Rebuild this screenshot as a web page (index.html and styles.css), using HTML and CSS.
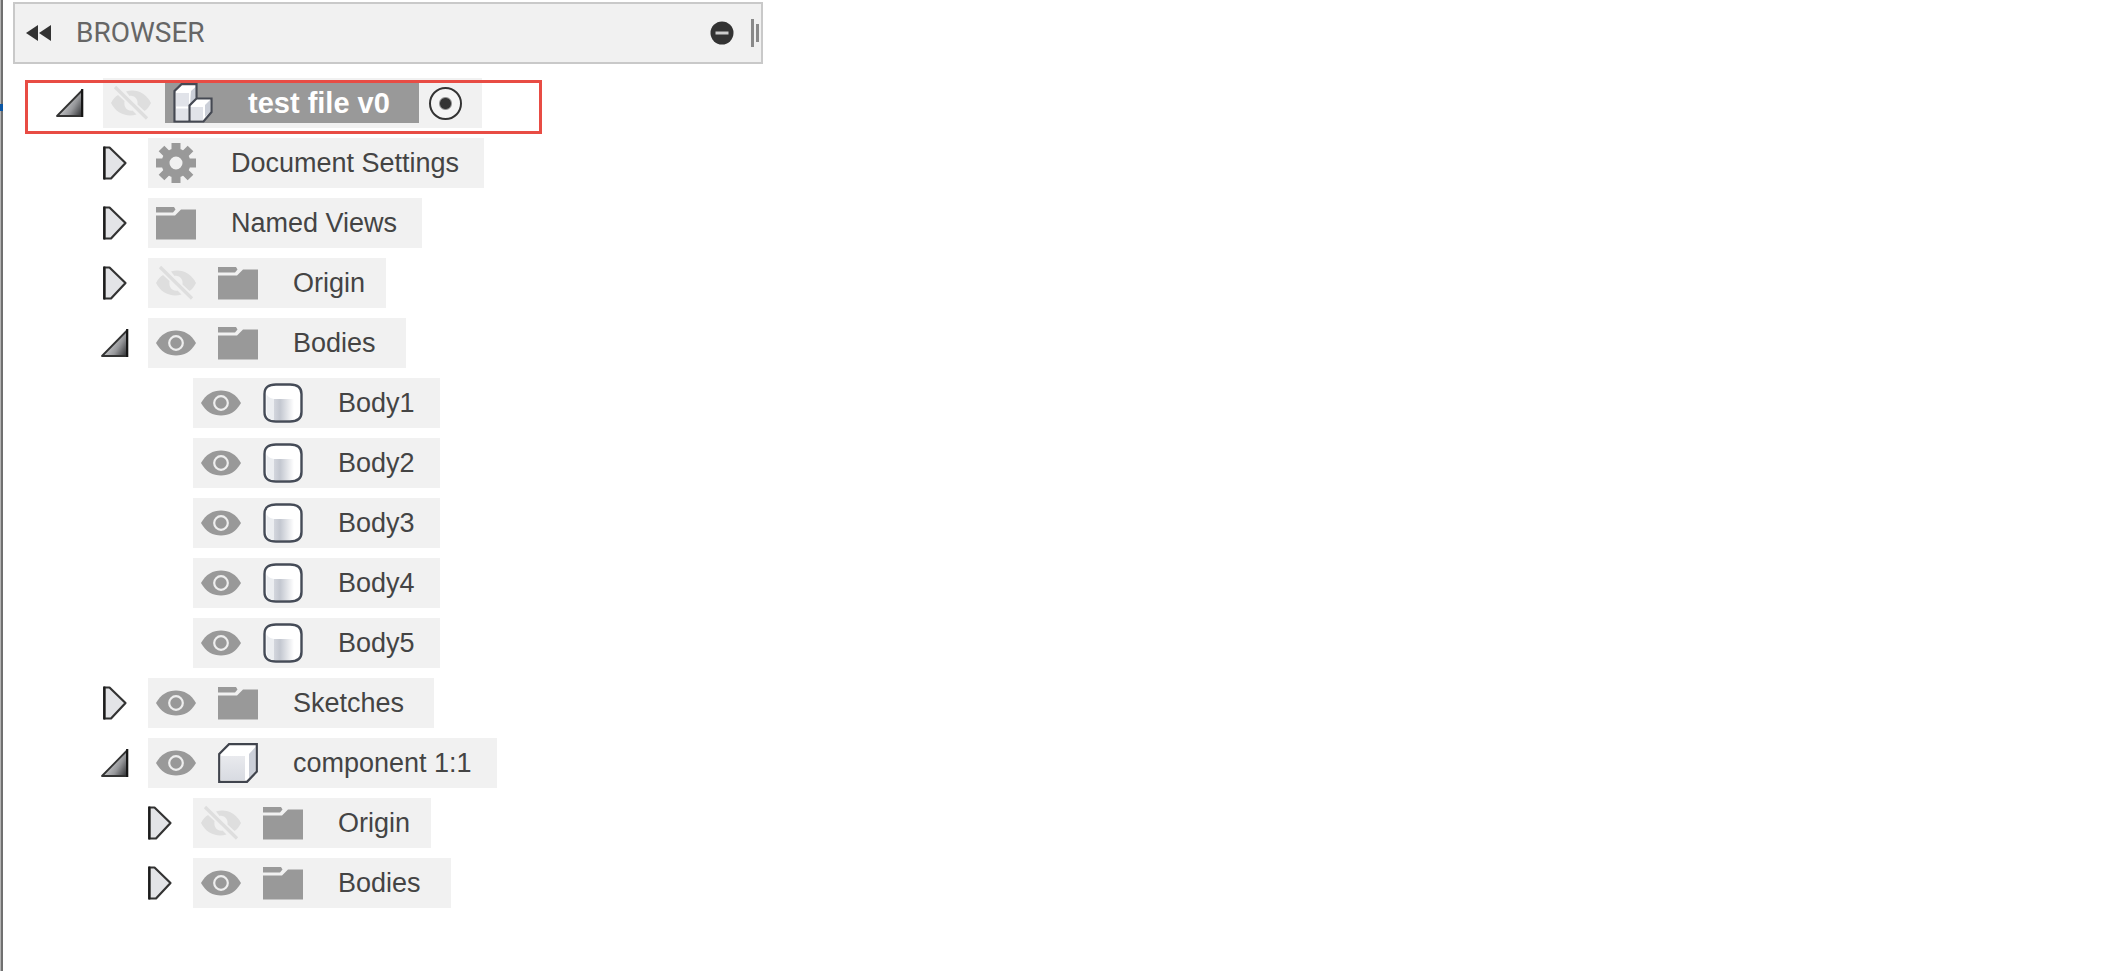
FILE: index.html
```html
<!DOCTYPE html>
<html lang="en">
<head>
    <meta charset="UTF-8">
    <meta name="viewport" content="width=device-width, initial-scale=1.0">
    <title>Browser</title>
    <link rel="stylesheet" href="styles.css">
</head>
<body>
    <!-- Shared icons -->
    <svg class="sprite" aria-hidden="true">
        <defs>
            <linearGradient id="openFill" x1="0.2" y1="0.4" x2="1" y2="0.9">
                <stop offset="0" stop-color="#d5d6d8"/>
                <stop offset="0.55" stop-color="#96979a"/>
                <stop offset="1" stop-color="#36373a"/>
            </linearGradient>
            <linearGradient id="bodyFill">
                <stop offset="0" stop-color="#d3d6dd"/>
                <stop offset="0.3" stop-color="#c3c7d0"/>
                <stop offset="1" stop-color="#ffffff"/>
            </linearGradient>
            <linearGradient id="faceFill" x2="0" y2="1">
                <stop offset="0" stop-color="#e9eaee"/>
                <stop offset="1" stop-color="#d8dbe2"/>
            </linearGradient>
        </defs>
        <symbol id="open" viewBox="0 0 30 36">
            <path d="M28 5.500V31H3z" fill="url(#openFill)" stroke="#333" stroke-width="1.800" stroke-linejoin="round"/>
            <path d="M28.200 4V32" stroke="#151515" stroke-width="2.200"/>
        </symbol>
        <symbol id="closed" viewBox="0 0 30 36">
            <path d="M5.500 2.500H10.500L26.500 18L12 33.500H5.500z" fill="#e3e4e7" stroke="#333" stroke-width="2.200" stroke-linejoin="round"/>
            <path d="M5.200 1.500V34.500" stroke="#1c1c1c" stroke-width="2.200"/>
        </symbol>
        <symbol id="eye" viewBox="0 0 40 40">
            <path d="M0 20C5 11 12 7.500 20 7.500S35 11 40 20C35 29 28 32.500 20 32.500S5 29 0 20z" fill="#999"/>
            <circle cx="20" cy="20" r="6.800" fill="#999" stroke="#eee" stroke-width="2.200"/>
        </symbol>
        <symbol id="eye-off" viewBox="0 0 40 40">
            <path d="M15 8.500C25 5.500 35 10 40 20C38 24 36 26.500 33.500 28L26.500 21.500C27.500 15 22 12 18.500 13z" fill="#dedede"/>
            <path d="M7 12L13.500 18C12.500 25 17 28.500 21.500 27.500L25.500 31.500C15 34.500 5 30 0 20C2 16 4.500 13.500 7 12z" fill="#dedede"/>
            <path d="M4 4L36 35.500" stroke="#dedede" stroke-width="3.200"/>
        </symbol>
        <symbol id="folder" viewBox="0 0 40 40">
            <path d="M0 4H18L19.500 6.500L17 9.500H0zM0 12.500H19L25 6.500H40V36.500H0z" fill="#999"/>
        </symbol>
        <symbol id="gear" viewBox="0 0 40 40">
            <g fill="none" stroke="#999">
                <circle cx="20" cy="20" r="10.500" stroke-width="8"/>
                <path d="M20 0V8M20 32V40M0 20H8M32 20H40" stroke-width="9"/>
                <path d="M5.500 5.500L11.500 11.500M28.500 28.500L34.500 34.500M34.500 5.500L28.500 11.500M11.500 28.500L5.500 34.500" stroke-width="8"/>
            </g>
        </symbol>
        <symbol id="body" viewBox="0 0 40 40">
            <path d="M1.500 11C1.500 4 6 1.500 13 1.500H27C34 1.500 38.500 4 38.500 11V29C38.500 36 34 38.500 27 38.500H13C6 38.500 1.500 36 1.500 29z" fill="#fff"/>
            <path d="M3.500 11Q5 15 11 16V37Q3.500 36 3.500 29z" fill="#eceef1"/>
            <path d="M11 16H31V37H11z" fill="url(#bodyFill)"/>
            <path d="M1.500 11C1.500 4 6 1.500 13 1.500H27C34 1.500 38.500 4 38.500 11V29C38.500 36 34 38.500 27 38.500H13C6 38.500 1.500 36 1.500 29z" fill="none" stroke="#454b57" stroke-width="2.400"/>
        </symbol>
        <symbol id="component" viewBox="0 0 40 40">
            <path d="M1.200 11L11 1.200H38.800V28.500L29 38.800H1.200z" fill="#fff"/>
            <path d="M3 13H27V37H3z" fill="url(#faceFill)"/>
            <path d="M31 11L37.500 4V28L31 35z" fill="#cbcfd8"/>
            <path d="M1.200 11L11 1.200H38.800V28.500L29 38.800H1.200z" fill="none" stroke="#40444d" stroke-width="2.200"/>
        </symbol>
        <symbol id="assembly" viewBox="0 0 40 40">
            <path d="M1.500 8L8.500 1.200H23.500V15.500H38.500V29L30.500 38.500H1.500z" fill="#fff"/>
            <path d="M3 10H16V22L15 23V37H3z" fill="#e1e3e9"/>
            <path d="M18 8L22.500 4V17L17 22z" fill="#cbcfd8"/>
            <path d="M17.500 24H30V37H17.500z" fill="#e1e3e9"/>
            <path d="M32 22L37 17V29L32 34z" fill="#cbcfd8"/>
            <path d="M3 24.500H15" stroke="#fff" stroke-width="2"/>
            <path d="M1.500 8L8.500 1.200H23.500V15.500H38.500V29L30.500 38.500H1.500zM23.500 15.500L16.500 22.500V38.500" fill="none" stroke="#454953" stroke-width="2.200"/>
        </symbol>
    </svg>

    <div class="edge-mark"></div>

    <main class="panel">
        <header class="panel-header">
            <button class="icon-btn" aria-label="Collapse panel">
                <svg width="25" height="16" viewBox="0 0 25 16"><path d="M0 8L12 0V16zM13 8L25 0V16z" fill="#333"/></svg>
            </button>
            <h1>BROWSER</h1>
            <button class="icon-btn" aria-label="Hide panel">
                <svg width="24" height="24" viewBox="0 0 24 24"><circle cx="12" cy="12" r="11.500" fill="#333"/><path d="M5.500 12H18.500" stroke="#ccc" stroke-width="3"/></svg>
            </button>
            <div class="grip"><span></span><span></span></div>
        </header>

        <ul class="tree">
            <li>
                <div class="row">
                    <button class="twisty" aria-label="Collapse test file v0"><svg><use href="#open"/></svg></button>
                    <div class="chip root">
                        <svg class="icon"><use href="#eye-off"/></svg>
                        <div class="selected">
                            <svg class="icon"><use href="#assembly"/></svg>
                            <span class="label">test file v0</span>
                        </div>
                        <input type="radio" class="activate" aria-label="Activate test file v0" checked>
                    </div>
                    <div class="highlight"></div>
                </div>
                <ul>
                    <li>
                        <div class="row">
                            <button class="twisty" aria-label="Expand Document Settings"><svg><use href="#closed"/></svg></button>
                            <div class="chip">
                                <svg class="icon"><use href="#gear"/></svg>
                                <span class="label">Document Settings</span>
                            </div>
                        </div>
                    </li>
                    <li>
                        <div class="row">
                            <button class="twisty" aria-label="Expand Named Views"><svg><use href="#closed"/></svg></button>
                            <div class="chip">
                                <svg class="icon"><use href="#folder"/></svg>
                                <span class="label">Named Views</span>
                            </div>
                        </div>
                    </li>
                    <li>
                        <div class="row">
                            <button class="twisty" aria-label="Expand Origin"><svg><use href="#closed"/></svg></button>
                            <div class="chip narrow">
                                <svg class="icon"><use href="#eye-off"/></svg>
                                <svg class="icon"><use href="#folder"/></svg>
                                <span class="label">Origin</span>
                            </div>
                        </div>
                    </li>
                    <li>
                        <div class="row">
                            <button class="twisty" aria-label="Collapse Bodies"><svg><use href="#open"/></svg></button>
                            <div class="chip wide">
                                <svg class="icon"><use href="#eye"/></svg>
                                <svg class="icon"><use href="#folder"/></svg>
                                <span class="label">Bodies</span>
                            </div>
                        </div>
                        <ul class="leaves">
                            <li class="row">
                                <div class="chip">
                                    <svg class="icon"><use href="#eye"/></svg>
                                    <svg class="icon"><use href="#body"/></svg>
                                    <span class="label">Body1</span>
                                </div>
                            </li>
                            <li class="row">
                                <div class="chip">
                                    <svg class="icon"><use href="#eye"/></svg>
                                    <svg class="icon"><use href="#body"/></svg>
                                    <span class="label">Body2</span>
                                </div>
                            </li>
                            <li class="row">
                                <div class="chip">
                                    <svg class="icon"><use href="#eye"/></svg>
                                    <svg class="icon"><use href="#body"/></svg>
                                    <span class="label">Body3</span>
                                </div>
                            </li>
                            <li class="row">
                                <div class="chip">
                                    <svg class="icon"><use href="#eye"/></svg>
                                    <svg class="icon"><use href="#body"/></svg>
                                    <span class="label">Body4</span>
                                </div>
                            </li>
                            <li class="row">
                                <div class="chip">
                                    <svg class="icon"><use href="#eye"/></svg>
                                    <svg class="icon"><use href="#body"/></svg>
                                    <span class="label">Body5</span>
                                </div>
                            </li>
                        </ul>
                    </li>
                    <li>
                        <div class="row">
                            <button class="twisty" aria-label="Expand Sketches"><svg><use href="#closed"/></svg></button>
                            <div class="chip wide">
                                <svg class="icon"><use href="#eye"/></svg>
                                <svg class="icon"><use href="#folder"/></svg>
                                <span class="label">Sketches</span>
                            </div>
                        </div>
                    </li>
                    <li>
                        <div class="row">
                            <button class="twisty" aria-label="Collapse component 1:1"><svg><use href="#open"/></svg></button>
                            <div class="chip">
                                <svg class="icon"><use href="#eye"/></svg>
                                <svg class="icon"><use href="#component"/></svg>
                                <span class="label">component 1:1</span>
                            </div>
                        </div>
                        <ul>
                            <li>
                                <div class="row">
                                    <button class="twisty" aria-label="Expand Origin"><svg><use href="#closed"/></svg></button>
                                    <div class="chip narrow">
                                        <svg class="icon"><use href="#eye-off"/></svg>
                                        <svg class="icon"><use href="#folder"/></svg>
                                        <span class="label">Origin</span>
                                    </div>
                                </div>
                            </li>
                            <li>
                                <div class="row">
                                    <button class="twisty" aria-label="Expand Bodies"><svg><use href="#closed"/></svg></button>
                                    <div class="chip wide">
                                        <svg class="icon"><use href="#eye"/></svg>
                                        <svg class="icon"><use href="#folder"/></svg>
                                        <span class="label">Bodies</span>
                                    </div>
                                </div>
                            </li>
                        </ul>
                    </li>
                </ul>
            </li>
        </ul>
    </main>
</body>
</html>
```

FILE: styles.css
```css
* {
    box-sizing: border-box;
}

body {
    margin: 0;
    min-height: 100vh;
    padding: 2px 0 0 12px;
    border-left: 1px solid #b4b4b4;
    background: #fff;
    box-shadow: inset 2px 0 #707070;
    color: #444;
    font-family: "Liberation Sans", Arial, sans-serif;
    font-size: 27px;
}

.sprite {
    position: absolute;
    width: 0;
    height: 0;
}

/* Sliver of the window behind, visible at the left edge */
.edge-mark {
    position: absolute;
    left: 0;
    top: 104px;
    width: 3px;
    height: 7px;
    background: #0a56a5;
}

button {
    display: flex;
    padding: 0;
    border: none;
    background: none;
    cursor: pointer;
}

.panel-header {
    display: flex;
    align-items: center;
    max-width: 750px;
    height: 62px;
    padding: 0 2px 0 11px;
    border: 2px solid #c9c9c9;
    background: #f1f1f1;
}

.panel-header h1 {
    flex: 1;
    margin: 0 0 0 25px;
    color: #666;
    font-family: Roboto, sans-serif;
    font-size: 28px;
    font-weight: 400;
    line-height: 32px;
}

.grip {
    display: flex;
    align-items: center;
    gap: 2px;
    margin-left: 17px;
}

.grip span {
    width: 3px;
    height: 28px;
    background: #8a8a8a;
}

.grip span:last-child {
    height: 18px;
}

ul {
    margin: 0;
    padding: 0;
    list-style: none;
}

.tree {
    padding: 14px 0 0 41px;
}

.tree ul {
    padding-left: 45px;
}

.tree .leaves {
    padding-left: 94px;
}

.row {
    position: relative;
    display: flex;
    height: 50px;
    margin-bottom: 10px;
}

.twisty {
    align-items: center;
    margin-right: 19px;
}

.twisty svg {
    width: 30px;
    height: 36px;
}

.chip {
    display: flex;
    align-items: center;
    gap: 22px;
    padding: 0 25px 0 8px;
    background: #f1f1f1;
}

.chip.narrow {
    padding-right: 21px;
}

.chip.wide {
    padding-right: 30px;
}

.chip.root {
    gap: 0;
    padding-right: 20px;
}

.icon {
    flex: none;
    width: 40px;
    height: 40px;
}

.label {
    margin-left: 13px;
    line-height: 32px;
    white-space: nowrap;
}

.selected {
    display: flex;
    align-items: center;
    gap: 22px;
    height: 40px;
    margin: 0 10px 0 14px;
    padding: 0 29px 0 8px;
    background: #999;
    color: #fff;
    font-size: 29px;
    font-weight: 700;
}

.activate {
    appearance: none;
    width: 33px;
    height: 33px;
    margin: 0;
    border: 2px solid #333;
    border-radius: 50%;
    background: radial-gradient(circle, #333 5px, #f4f4f4 7px);
}

/* Red frame around the root item */
.highlight {
    position: absolute;
    top: 2px;
    left: -29px;
    width: 517px;
    height: 54px;
    border: 3px solid #e84c44;
}
```
